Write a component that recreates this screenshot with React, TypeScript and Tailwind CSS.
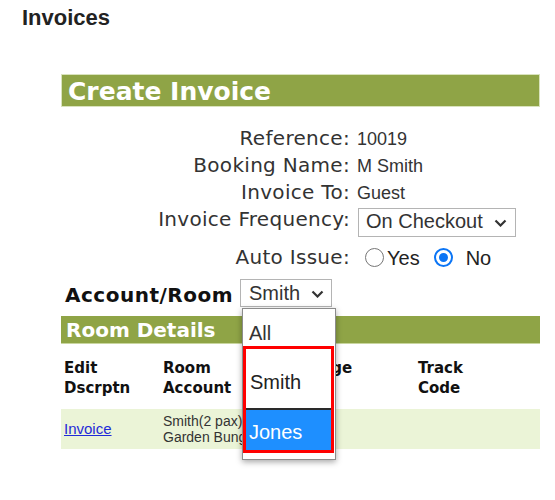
import React from "react";

const dv = { fontFamily: '"DejaVu Sans", Verdana, sans-serif' };
const ar = { fontFamily: '"Liberation Sans", Arial, sans-serif' };

function Chevron() {
  return (
    <svg width="13" height="8" viewBox="0 0 13 8" className="shrink-0">
      <polyline points="1.5,1.5 6.5,6.5 11.5,1.5" fill="none" stroke="#333" strokeWidth="2.2" />
    </svg>
  );
}

function Row({ label, children }: { label: string; children: React.ReactNode }) {
  return (
    <div className="flex items-baseline h-[27px] leading-[27px]">
      <div className="w-[289px] text-right text-[20px] tracking-[0.3px] text-[#333]" style={dv}>
        {label}
      </div>
      <div className="pl-[7px] text-[18px] text-[#333]" style={ar}>
        {children}
      </div>
    </div>
  );
}

export default function App() {
  return (
    <div className="relative w-[555px] h-[500px] bg-white overflow-hidden">
      <div className="pl-[22px] pt-[7px] text-[22px] leading-[22px] font-bold text-[#222]" style={ar}>
        Invoices
      </div>

      <div className="ml-[61px] mt-[45px] w-[479px]">
        <div
          className="h-[33px] bg-[#8fa446] border border-[#d9e3bd] pl-[6px] pt-[1px] text-[25px] leading-[31px] font-bold text-white"
          style={dv}
        >
          Create Invoice
        </div>

        <div className="mt-[18px]">
          <Row label="Reference:">10019</Row>
          <Row label="Booking Name:">M Smith</Row>
          <Row label="Invoice To:">Guest</Row>
          <div className="flex items-start h-[38px]">
            <div className="w-[289px] text-right text-[20px] tracking-[0.3px] leading-[27px] text-[#333]" style={dv}>
              Invoice Frequency:
            </div>
            <div
              className="ml-[8px] mt-[2px] w-[158px] h-[29px] border border-[#b4b4b4] flex items-center justify-between pl-[7px] pr-[8px] pb-[3px] text-[20px] leading-[22px] text-[#333]"
              style={ar}
            >
              <span>On Checkout</span>
              <span className="pt-[3px]"><Chevron /></span>
            </div>
          </div>
          <div className="flex items-start h-[27px]">
            <div className="w-[289px] text-right text-[20px] tracking-[0.3px] leading-[27px] text-[#333]" style={dv}>
              Auto Issue:
            </div>
            <div className="flex items-start pl-[15px] text-[20px] leading-[22px] text-[#222]" style={ar}>
              <span className="mt-[4px] w-[19px] h-[19px] rounded-full border border-[#767676] bg-white" />
              <span className="mt-[3px] ml-[3px]">Yes</span>
              <span className="mt-[4px] ml-[14px] w-[19px] h-[19px] rounded-full border-[2px] border-[#0b75f5] bg-white flex items-center justify-center">
                <span className="w-[9px] h-[9px] rounded-full bg-[#0b75f5]" />
              </span>
              <span className="mt-[3px] ml-[13px]">No</span>
            </div>
          </div>
        </div>

        <div className="mt-[8px] flex items-start h-[28px]">
          <div
            className="w-[179px] pl-[4px] pt-[5px] text-[20px] leading-[22px] font-bold tracking-[0.5px] text-[#111]"
            style={dv}
          >
            Account/Room
          </div>
          <div
            className="w-[92px] h-[28px] border border-[#b4b4b4] flex items-center justify-between pl-[8px] pr-[7px] text-[20px] leading-[22px] text-[#333]"
            style={ar}
          >
            <span>Smith</span>
            <span className="pt-[2px]"><Chevron /></span>
          </div>
        </div>

        <div
          className="mt-[9px] h-[28px] bg-[#8fa446] border-b border-[#c9d69f] pl-[5px] text-[20px] leading-[28px] font-bold text-white"
          style={dv}
        >
          Room Details
        </div>

        <div
          className="mt-[14px] pl-[3px] grid grid-cols-[99px_129px_126px_auto] text-[15px] leading-[20px] font-bold text-[#111]"
          style={dv}
        >
          <div>Edit<br />Dscrptn</div>
          <div>Room<br />Account</div>
          <div>Charge</div>
          <div>Track<br />Code</div>
        </div>

        <div className="mt-[11px] h-[40px] bg-[#ebf4d7] pl-[3px] grid grid-cols-[99px_129px_126px_auto] items-center" style={ar}>
          <div className="text-[15px] leading-[18px]">
            <span className="text-[#1f2bd8] underline">Invoice</span>
          </div>
          <div className="w-[79px] overflow-hidden text-[14px] leading-[16px] text-[#333] whitespace-nowrap">
            Smith(2 pax)<br />Garden Bungalow
          </div>
          <div />
          <div />
        </div>
      </div>

      <div
        className="absolute left-[242px] top-[308px] w-[94px] h-[152px] bg-white border border-[#8c8c8c] shadow-[0_2px_6px_rgba(0,0,0,0.35)] flex flex-col text-[20px] leading-[22px]"
        style={ar}
      >
        <div className="h-[37px] pt-[13px] pl-[6px] text-[#333]">All</div>
        <div className="w-[91px] h-[107px] border-[3px] border-[#ff0000] flex flex-col">
          <div className="h-[59px] pt-[22px] pl-[4px] bg-white text-[#222]">Smith</div>
          <div className="h-[2px] bg-[#2a2a2a]" />
          <div className="flex-1 pt-[11px] pl-[3px] bg-[#1e8fff] text-white">Jones</div>
        </div>
      </div>
    </div>
  );
}
